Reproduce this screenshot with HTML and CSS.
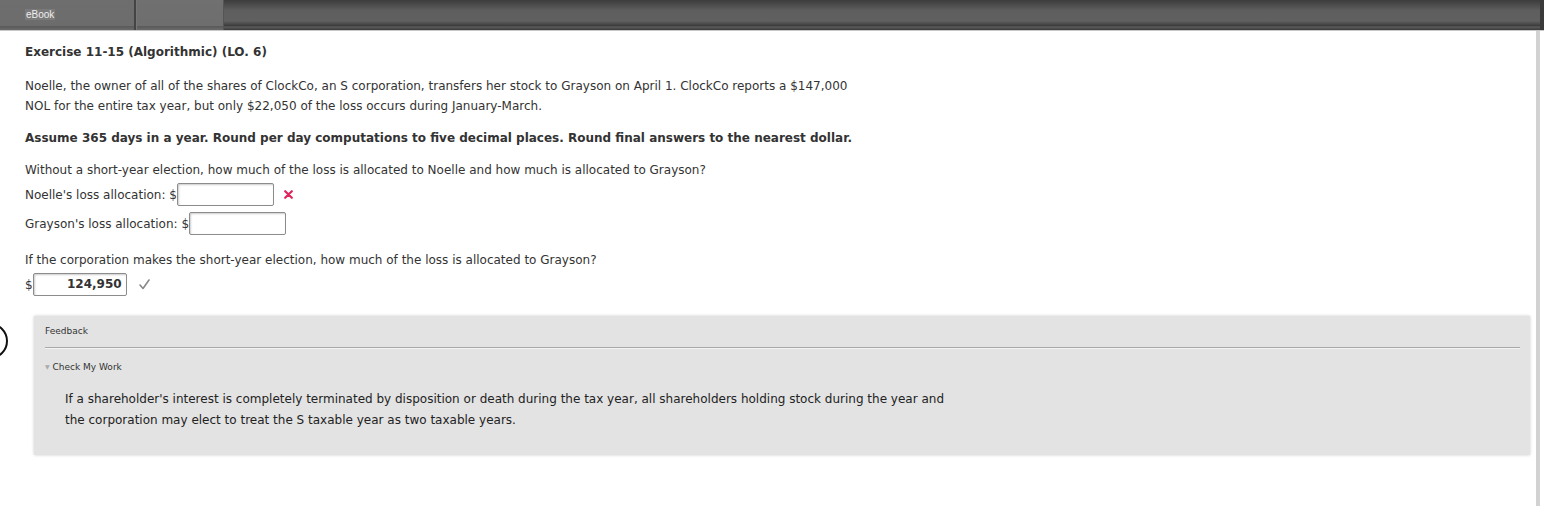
FILE: index.html
```html
<!DOCTYPE html>
<html>
<head>
<meta charset="utf-8">
<link rel="stylesheet" href="styles.css">
</head>
<body>
<div class="topbar">
  <div class="tab tab-ebook"><span class="tab-label">eBook</span></div>
  <div class="tab tab-second"></div>
  <div class="bar-rest"></div>
</div>
<div class="page">
  <div class="content">
    <h1 class="title">Exercise 11-15 (Algorithmic) (LO. 6)</h1>
    <p class="para">Noelle, the owner of all of the shares of ClockCo, an S corporation, transfers her stock to Grayson on April 1. ClockCo reports a $147,000<br>NOL for the entire tax year, but only $22,050 of the loss occurs during January-March.</p>
    <p class="para bold">Assume 365 days in a year. Round per day computations to five decimal places. Round final answers to the nearest dollar.</p>
    <p class="para q">Without a short-year election, how much of the loss is allocated to Noelle and how much is allocated to Grayson?</p>
    <div class="row"><span>Noelle's loss allocation: $</span><span class="inp inp-wide"></span><svg class="mark-x" width="9" height="9" viewBox="0 0 9 9"><path d="M1.2 1.2 L7.8 7.8 M7.8 1.2 L1.2 7.8" stroke="#e0245e" stroke-width="2.2" stroke-linecap="round"/></svg></div>
    <div class="row"><span>Grayson's loss allocation: $</span><span class="inp inp-wide"></span></div>
    <p class="para q2">If the corporation makes the short-year election, how much of the loss is allocated to Grayson?</p>
    <div class="row"><span>$</span><span class="inp inp-ans">124,950</span><svg class="mark-ok" width="11" height="11" viewBox="0 0 11 11"><path d="M1 6 L4 9.5 L10 1" fill="none" stroke="#888" stroke-width="1.6" stroke-linecap="round" stroke-linejoin="round"/></svg></div>
  </div>
  <div class="circle"></div>
  <div class="feedback">
    <div class="fb-head">Feedback</div>
    <div class="fb-rule"></div>
    <div class="fb-toggle"><span class="tri">&#x25BC;</span> <span class="cmw">Check My Work</span></div>
    <p class="fb-text">If a shareholder's interest is completely terminated by disposition or death during the tax year, all shareholders holding stock during the year and<br>the corporation may elect to treat the S taxable year as two taxable years.</p>
  </div>
</div>
</body>
</html>
```
FILE: styles.css
```css
html, body { margin: 0; padding: 0; background: #fff; }
body { width: 1544px; height: 506px; overflow: hidden; position: relative; font-family: "DejaVu Sans", Verdana, sans-serif; color: #333; }

.topbar { height: 31px; display: flex; background: linear-gradient(#3c3c3c, #5e5e5e 35%, #606060 70%, #3e3e3e 85%, #5a5a5a 90%, #3a3a3a); border-bottom: 1px solid #c8c8c8; box-sizing: border-box; }
.tab { height: 30px; box-sizing: border-box; }
.tab-ebook { width: 136px; background: linear-gradient(#6e6e6e, #6c6c6c 85%, #5a5a5a 88%, #6a6a6a); border-right: 2px solid #444; display: flex; align-items: flex-start; padding: 9px 0 0 25px; }
.tab-label { font-family: "Liberation Sans", Arial, sans-serif; font-size: 10px; color: #eee; background: #7a7a7a; padding: 0 1px; line-height: 11px; }
.tab-second { width: 88px; background: linear-gradient(#707070, #6e6e6e 85%, #5a5a5a 88%, #6a6a6a); border-right: 1px solid #555; border-left: 1px solid #777; }
.bar-rest { flex: 1; border-right: 4px solid #3a3a3a; }

.page { position: relative; border-right: 4px solid #d2d2d2; margin-right: 4px; height: 475px; }
.content { padding: 13px 0 0 25px; font-size: 12px; }
.title { margin: 0 0 16px; font-size: 12px; font-weight: bold; color: #333; line-height: 16px; }
.para { margin: 0 0 12px; line-height: 20px; }
.bold { font-weight: bold; font-size: 12px; }
.q { margin-bottom: 0; }
.q2 { margin: 12px 0 0; }
.row { display: flex; align-items: center; height: 29px; line-height: 20px; }
.inp { display: inline-block; height: 23px; border: 1px solid #8c8c8c; border-radius: 2px; box-shadow: inset 1px 1px 2px #ccc; background: #fff; box-sizing: border-box; }
.inp-wide { width: 97px; }
.inp-ans { width: 94px; text-align: right; font-weight: bold; font-size: 12px; padding-right: 4px; line-height: 21px; color: #333; }
.mark-x { margin-left: 10px; }
.mark-ok { margin-left: 12px; }

.circle { position: absolute; left: -28px; top: 292px; width: 36px; height: 36px; border: 2px solid #111; border-radius: 50%; box-sizing: border-box; }

.feedback { margin: 17px 6px 0 34px; background: #e3e3e3; box-shadow: 0 0 3px #ccc; padding: 8px 10px 24px 11px; }
.fb-head { font-size: 9px; color: #333; line-height: 14px; }
.fb-rule { height: 0; border-top: 1px solid #a8a8a8; border-bottom: 1px solid #f4f4f4; margin: 9px 0 12px; }
.fb-toggle { font-size: 9px; color: #333; line-height: 12px; }
.tri { color: #aaa; font-size: 6px; vertical-align: 1px; }
.fb-text { margin: 16px 0 0 20px; font-size: 12px; line-height: 21px; color: #222; }
```
